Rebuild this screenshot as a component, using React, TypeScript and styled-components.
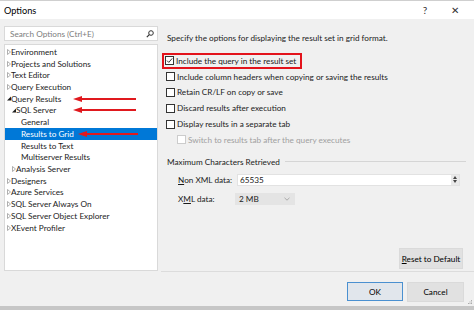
import React from "react";
import styled, { createGlobalStyle, css } from "styled-components";

const GlobalStyle = createGlobalStyle`
  html, body {
    margin: 0;
    padding: 0;
    background: #f0f0f0;
  }
  body {
    font-family: "Segoe UI", Lato, "Noto Sans", sans-serif;
  }
`;

const Window = styled.div`
  width: 474px;
  height: 310px;
  display: flex;
  flex-direction: column;
  background: #f0f0f0;
  overflow: hidden;
  font-size: 8.2px;
  color: #1b1b1b;
`;

const TitleBar = styled.div`
  height: 19px;
  box-sizing: border-box;
  background: #fff;
  border-top: 1px solid #cfcfcf;
  display: flex;
  align-items: center;
  padding: 0 4px;
  font-size: 9.2px;
  color: #000;
`;

const TitleText = styled.div`
  flex: 1;
`;

const TitleButton = styled.div`
  width: 30px;
  text-align: center;
  font-size: 10px;
  color: #333;
`;

const Body = styled.div`
  height: 252px;
  box-sizing: border-box;
  display: flex;
  padding: 7px 8px 0 4px;
`;

const LeftColumn = styled.div`
  width: 154px;
  display: flex;
  flex-direction: column;
  gap: 3px;
`;

const SearchBox = styled.div`
  height: 15px;
  box-sizing: border-box;
  background: #fff;
  border: 1px solid #d9d9d9;
  display: flex;
  align-items: center;
  padding: 0 3px 0 5px;
  color: #7d7d7d;
`;

const SearchText = styled.div`
  flex: 1;
`;

const Tree = styled.div`
  flex: 1;
  background: #fff;
  border: 1px solid #d9d9d9;
  padding-top: 1px;
`;

const TreeRow = styled.div<{ $level: number; $selected?: boolean }>`
  position: relative;
  height: 11.73px;
  display: flex;
  align-items: center;
  padding-left: ${(p) => 2 + p.$level * 5}px;
  white-space: nowrap;
  ${(p) =>
    p.$selected &&
    css`
      background: #0078d7;
      color: #fff;
    `}
`;

const Expander = styled.span`
  width: 4px;
  display: flex;
  align-items: center;
  flex-shrink: 0;
`;

const Arrow = styled.svg`
  position: absolute;
  top: 50%;
  margin-top: -3px;
  height: 6px;
`;

const RightColumn = styled.div`
  flex: 1;
  margin-left: 4px;
  display: flex;
  flex-direction: column;
`;

const Description = styled.div`
  margin-top: 6px;
  line-height: 12px;
  padding-left: 5px;
`;

const CheckList = styled.div`
  margin-top: 9px;
  display: flex;
  flex-direction: column;
`;

const CheckRow = styled.div<{ $indent?: boolean; $disabled?: boolean }>`
  height: 15.8px;
  display: flex;
  align-items: center;
  padding-left: ${(p) => (p.$indent ? 15 : 4)}px;
  color: ${(p) => (p.$disabled ? "#a0a0a0" : "inherit")};
`;

const Highlight = styled.div`
  display: flex;
  align-items: center;
  height: 12px;
  margin-left: -4px;
  padding: 0 4px 0 1px;
  border: 2px solid #e3131b;
`;

const Box = styled.span<{ $disabled?: boolean }>`
  width: 9px;
  height: 9px;
  box-sizing: border-box;
  border: 1px solid ${(p) => (p.$disabled ? "#cccccc" : "#333")};
  background: #fff;
  margin-right: 2px;
  display: flex;
  align-items: center;
  justify-content: center;
  flex-shrink: 0;
`;

const GroupHeader = styled.div`
  margin-top: 8px;
  height: 12px;
  display: flex;
  align-items: center;
  padding-left: 5px;
  gap: 5px;
`;

const GroupLine = styled.div`
  flex: 1;
  height: 1px;
  background: #d5d5d5;
`;

const FieldRow = styled.div<{ $gap: number }>`
  margin-top: ${(p) => p.$gap}px;
  height: 12px;
  display: flex;
  align-items: center;
  padding-left: 16px;
`;

const FieldLabel = styled.div`
  width: 59px;
`;

const NumberInput = styled.div`
  flex: 1;
  height: 12px;
  box-sizing: border-box;
  background: #fff;
  border: 1px solid #e2e2e2;
  display: flex;
  align-items: center;
  padding-left: 2px;
  margin-right: 6px;
`;

const Spinner = styled.div`
  margin-left: auto;
  width: 8px;
  height: 10px;
  background: #e9e9e9;
  display: flex;
  flex-direction: column;
  align-items: center;
  justify-content: center;
  gap: 1px;
`;

const Select = styled.div`
  margin-left: -2px;
  width: 60px;
  height: 12px;
  box-sizing: border-box;
  background: #e4e4e4;
  display: flex;
  align-items: center;
  padding: 0 5px 0 4px;
`;

const Spacer = styled.div`
  flex: 1;
`;

const ButtonRow = styled.div`
  display: flex;
  justify-content: flex-end;
  padding: 0 3px 2px 0;
`;

const Button = styled.div<{ $primary?: boolean; $width: number; $height: number }>`
  width: ${(p) => p.$width}px;
  height: ${(p) => p.$height}px;
  box-sizing: border-box;
  display: flex;
  align-items: center;
  justify-content: center;
  white-space: nowrap;
  background: ${(p) => (p.$primary ? "#e1e6ec" : "#e1e1e1")};
  border: 1px solid ${(p) => (p.$primary ? "#4a90d0" : "#dadada")};
  color: #000;
`;

const Footer = styled.div`
  flex: 1;
  margin-left: 161px;
  border-top: 1px solid #dcdcdc;
  display: flex;
  justify-content: flex-end;
  gap: 4px;
  padding: 10px 10px 0 0;
  position: relative;
`;

const Grip = styled.svg`
  position: absolute;
  right: 1px;
  bottom: 1px;
`;

const BottomStrip = styled.div`
  height: 4px;
  background: #c6c6c6;
`;

type Node = {
  label: string;
  level: number;
  state?: "open" | "closed";
  selected?: boolean;
  arrow?: [number, number];
};

const nodes: Node[] = [
  { label: "Environment", level: 0, state: "closed" },
  { label: "Projects and Solutions", level: 0, state: "closed" },
  { label: "Text Editor", level: 0, state: "closed" },
  { label: "Query Execution", level: 0, state: "closed" },
  { label: "Query Results", level: 0, state: "open", arrow: [68, 63] },
  { label: "SQL Server", level: 1, state: "open", arrow: [68, 63] },
  { label: "General", level: 2 },
  { label: "Results to Grid", level: 2, selected: true, arrow: [73, 60] },
  { label: "Results to Text", level: 2 },
  { label: "Multiserver Results", level: 2 },
  { label: "Analysis Server", level: 1, state: "closed" },
  { label: "Designers", level: 0, state: "closed" },
  { label: "Azure Services", level: 0, state: "closed" },
  { label: "SQL Server Always On", level: 0, state: "closed" },
  { label: "SQL Server Object Explorer", level: 0, state: "closed" },
  { label: "XEvent Profiler", level: 0, state: "closed" },
];

const Triangle = ({ state }: { state?: "open" | "closed" }) => {
  if (state === "closed")
    return (
      <svg width="4" height="6" viewBox="0 0 4 6">
        <path d="M0.5 0.5 L3.5 3 L0.5 5.5 Z" fill="none" stroke="#9a9a9a" strokeWidth="0.8" />
      </svg>
    );
  if (state === "open")
    return (
      <svg width="4" height="5" viewBox="0 0 4 5">
        <path d="M4 0.5 L4 4.5 L0 4.5 Z" fill="#1e1e1e" />
      </svg>
    );
  return null;
};

const RedArrow = ({ left, width }: { left: number; width: number }) => (
  <Arrow style={{ left, width }} viewBox={`0 0 ${width} 6`}>
    <line x1="6" y1="3" x2={width} y2="3" stroke="#e0191e" strokeWidth="2" />
    <path d="M0 3 L9 0 L9 6 Z" fill="#e0191e" />
  </Arrow>
);

const Check = ({ checked, disabled }: { checked?: boolean; disabled?: boolean }) => (
  <Box $disabled={disabled}>
    {checked && (
      <svg width="7" height="7" viewBox="0 0 7 7">
        <path d="M1 3.6 L2.8 5.4 L6.2 1.4" fill="none" stroke="#222" strokeWidth="0.9" />
      </svg>
    )}
  </Box>
);

const App = () => {
  return (
    <Window>
      <GlobalStyle />
      <TitleBar>
        <TitleText>Options</TitleText>
        <TitleButton>?</TitleButton>
        <TitleButton>✕</TitleButton>
      </TitleBar>
      <Body>
        <LeftColumn>
          <SearchBox>
            <SearchText>Search Options (Ctrl+E)</SearchText>
            <svg width="8" height="8" viewBox="0 0 8 8">
              <circle cx="5" cy="3" r="2.3" fill="none" stroke="#333" strokeWidth="1" />
              <line x1="3.3" y1="4.7" x2="0.8" y2="7.2" stroke="#333" strokeWidth="1.2" />
            </svg>
          </SearchBox>
          <Tree>
            {nodes.map((n) => (
              <TreeRow key={n.label} $level={n.level} $selected={n.selected}>
                <Expander>
                  <Triangle state={n.state} />
                </Expander>
                {n.label}
                {n.arrow && <RedArrow left={n.arrow[0]} width={n.arrow[1]} />}
              </TreeRow>
            ))}
          </Tree>
        </LeftColumn>
        <RightColumn>
          <Description>Specify the options for displaying the result set in grid format.</Description>
          <CheckList>
            <CheckRow>
              <Highlight>
                <Check checked />
                Include the query in the result set
              </Highlight>
            </CheckRow>
            <CheckRow>
              <Check />
              Include column headers when copying or saving the results
            </CheckRow>
            <CheckRow>
              <Check />
              Retain CR/LF on copy or save
            </CheckRow>
            <CheckRow>
              <Check />
              Discard results after execution
            </CheckRow>
            <CheckRow>
              <Check />
              Display results in a separate tab
            </CheckRow>
            <CheckRow $indent $disabled>
              <Check disabled />
              Switch to results tab after the query executes
            </CheckRow>
          </CheckList>
          <GroupHeader>
            Maximum Characters Retrieved
            <GroupLine />
          </GroupHeader>
          <FieldRow $gap={6}>
            <FieldLabel>
              <u>N</u>on XML data:
            </FieldLabel>
            <NumberInput>
              65535
              <Spinner>
                <svg width="4" height="3" viewBox="0 0 4 3">
                  <path d="M0 3 L2 0 L4 3 Z" fill="#444" />
                </svg>
                <svg width="4" height="3" viewBox="0 0 4 3">
                  <path d="M0 0 L4 0 L2 3 Z" fill="#444" />
                </svg>
              </Spinner>
            </NumberInput>
          </FieldRow>
          <FieldRow $gap={7}>
            <FieldLabel>
              X<u>M</u>L data:
            </FieldLabel>
            <Select>
              2 MB
              <Spacer />
              <svg width="6" height="4" viewBox="0 0 6 4">
                <path d="M0.5 0.8 L3 3.2 L5.5 0.8" fill="none" stroke="#9a9a9a" strokeWidth="0.8" />
              </svg>
            </Select>
          </FieldRow>
          <Spacer />
          <ButtonRow>
            <Button $width={64} $height={21}>
              <span>
                <u>R</u>eset to Default
              </span>
            </Button>
          </ButtonRow>
        </RightColumn>
      </Body>
      <Footer>
        <Button $primary $width={56} $height={19}>
          OK
        </Button>
        <Button $width={57} $height={20}>
          Cancel
        </Button>
        <Grip width="5" height="5" viewBox="0 0 5 5">
          <rect x="3" y="0" width="1" height="1" fill="#aaa" />
          <rect x="1.5" y="1.5" width="1" height="1" fill="#aaa" />
          <rect x="3" y="1.5" width="1" height="1" fill="#aaa" />
          <rect x="0" y="3" width="1" height="1" fill="#aaa" />
          <rect x="1.5" y="3" width="1" height="1" fill="#aaa" />
          <rect x="3" y="3" width="1" height="1" fill="#aaa" />
        </Grip>
      </Footer>
      <BottomStrip />
    </Window>
  );
};

export default App;
